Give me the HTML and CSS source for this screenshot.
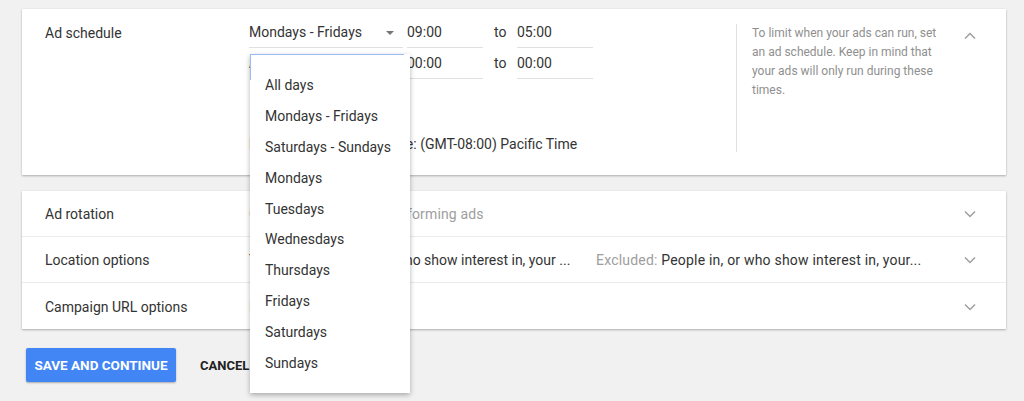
FILE: index.html
```html
<!DOCTYPE html>
<html>
<head>
<meta charset="utf-8">
<link rel="stylesheet" href="styles.css">
</head>
<body>
<div class="page">
  <section class="card schedule">
    <div class="label top">Ad schedule</div>
    <div class="controls">
      <div class="trow">
        <div class="select">
          <span>Mondays - Fridays</span>
          <svg class="caret" width="8" height="4" viewBox="0 0 8 4"><path d="M0 0h8L4 4z" fill="#757575"/></svg>
        </div>
        <div class="time">09:00</div>
        <div class="to">to</div>
        <div class="time">05:00</div>
      </div>
      <div class="trow">
        <div class="select focused">
          <span>All days</span>
        </div>
        <div class="time">00:00</div>
        <div class="to">to</div>
        <div class="time">00:00</div>
      </div>
      <div class="tz">Runs in account time zone: (GMT-08:00) Pacific Time</div>
    </div>
    <div class="help">To limit when your ads can run, set an ad schedule. Keep in mind that your ads will only run during these times.</div>
    <svg class="chev top" width="24" height="24" viewBox="0 0 24 24"><polyline points="7,14.5 12,9.5 17,14.5" fill="none" stroke="#9e9e9e" stroke-width="1.5"/></svg>
  </section>

  <section class="card list">
    <div class="lrow">
      <div class="label">Ad rotation</div>
      <div class="value muted wide">Optimize: Prefer best performing ads</div>
      <svg class="chev" width="24" height="24" viewBox="0 0 24 24"><polyline points="7,9.5 12,14.5 17,9.5" fill="none" stroke="#9e9e9e" stroke-width="1.5"/></svg>
    </div>
    <div class="lrow">
      <div class="label">Location options</div>
      <div class="value">
        <span class="part">Targeting: People in, or who show interest in, your ...</span>
        <span class="part excl"><span class="muted">Excluded:</span> People in, or who show interest in, your...</span>
      </div>
      <svg class="chev" width="24" height="24" viewBox="0 0 24 24"><polyline points="7,9.5 12,14.5 17,9.5" fill="none" stroke="#9e9e9e" stroke-width="1.5"/></svg>
    </div>
    <div class="lrow">
      <div class="label">Campaign URL options</div>
      <div class="value muted">No options set</div>
      <svg class="chev" width="24" height="24" viewBox="0 0 24 24"><polyline points="7,9.5 12,14.5 17,9.5" fill="none" stroke="#9e9e9e" stroke-width="1.5"/></svg>
    </div>
  </section>

  <div class="actions">
    <button class="primary">SAVE AND CONTINUE</button>
    <button class="flat">CANCEL</button>
  </div>

  <ul class="menu">
    <li>All days</li>
    <li>Mondays - Fridays</li>
    <li>Saturdays - Sundays</li>
    <li>Mondays</li>
    <li>Tuesdays</li>
    <li>Wednesdays</li>
    <li>Thursdays</li>
    <li>Fridays</li>
    <li>Saturdays</li>
    <li>Sundays</li>
  </ul>
</div>
</body>
</html>
```

FILE: styles.css
```css
* { box-sizing: border-box; }
html, body { margin: 0; }
body {
  background: #f1f1f1;
  font-family: Roboto, "Liberation Sans", sans-serif;
  font-size: 14px;
  color: #333;
}
.page {
  position: relative;
  padding: 9px 18px 0 22px;
  height: 401px;
  overflow: hidden;
}
.card {
  background: #fff;
  box-shadow: 0 1px 2px rgba(0,0,0,.28), 0 0 1px rgba(0,0,0,.08);
}
.schedule {
  display: flex;
  align-items: flex-start;
  padding: 0 24px 21px 23px;
}
.label {
  width: 204px;
  flex: none;
  line-height: 20px;
  color: #333;
}
.label.top { padding-top: 14px; }
.controls {
  width: 487px;
  flex: none;
  padding-top: 8px;
}
.trow {
  display: flex;
  height: 31px;
  line-height: 30px;
}
.select {
  width: 154px;
  flex: none;
  display: flex;
  justify-content: space-between;
  align-items: center;
  border-bottom: 1px solid #e0e0e0;
  padding-right: 9px;
  color: #333;
}
.select.focused { border-bottom-color: transparent; }
.caret { flex: none; margin-top: 1px; }
.time {
  width: 76px;
  flex: none;
  margin-left: 4px;
  border-bottom: 1px solid #e0e0e0;
  color: #333;
}
.time + .to + .time { margin-left: 0; }
.to {
  width: 34px;
  flex: none;
  padding-left: 11px;
  color: #333;
}
.tz {
  margin-top: 55px;
  line-height: 20px;
  color: #333;
}
.help {
  width: 211px;
  flex: none;
  margin-top: 15px;
  height: 128px;
  border-left: 1px solid #e0e0e0;
  padding: 0 5px 0 15px;
  font-size: 12px;
  line-height: 19px;
  color: #8f8f8f;
}
.chev { flex: none; display: block; }
.chev.top { margin-top: 15px; margin-left: 11px; }
.list { margin-top: 16px; }
.lrow {
  display: flex;
  align-items: center;
  height: 46px;
  padding: 1px 24px 0 23px;
  border-bottom: 1px solid #ececec;
}
.lrow:last-child { border-bottom: none; height: 46px; }
.value {
  flex: 1;
  display: flex;
  gap: 24px;
  white-space: nowrap;
  color: #333;
}
.value.wide { letter-spacing: 0.15px; }
.muted { color: #9e9e9e; }
.part { width: 323px; flex: none; }
.part.excl { width: auto; letter-spacing: 0.2px; }
.actions {
  display: flex;
  align-items: center;
  margin-top: 19px;
  padding-left: 4px;
  gap: 24px;
}
button {
  font-family: Roboto, "Liberation Sans", sans-serif;
  font-size: 13px;
  font-weight: 700;
  border: none;
  cursor: pointer;
}
.primary {
  height: 34px;
  width: 150px;
  background: #4285f4;
  color: #fff;
  border-radius: 2px;
  box-shadow: 0 1px 2px rgba(0,0,0,.3);
  padding: 0;
  font-size: 13.5px;
}
.flat {
  background: transparent;
  color: #212121;
  padding: 0;
}
.menu {
  position: absolute;
  left: 250px;
  top: 54px;
  width: 160px;
  height: 339px;
  margin: 0;
  padding: 16px 0 0;
  list-style: none;
  background: #fff;
  box-shadow: 0 2px 5px rgba(0,0,0,.3);
}
.menu::before {
  content: "";
  position: absolute;
  left: 0;
  top: 0;
  width: 153px;
  height: 25px;
  border-top: 1px solid #9bbcf5;
  border-left: 1px solid #9bbcf5;
}
.menu li {
  height: 30.9px;
  line-height: 30px;
  padding-left: 15px;
  color: #333;
}
```
